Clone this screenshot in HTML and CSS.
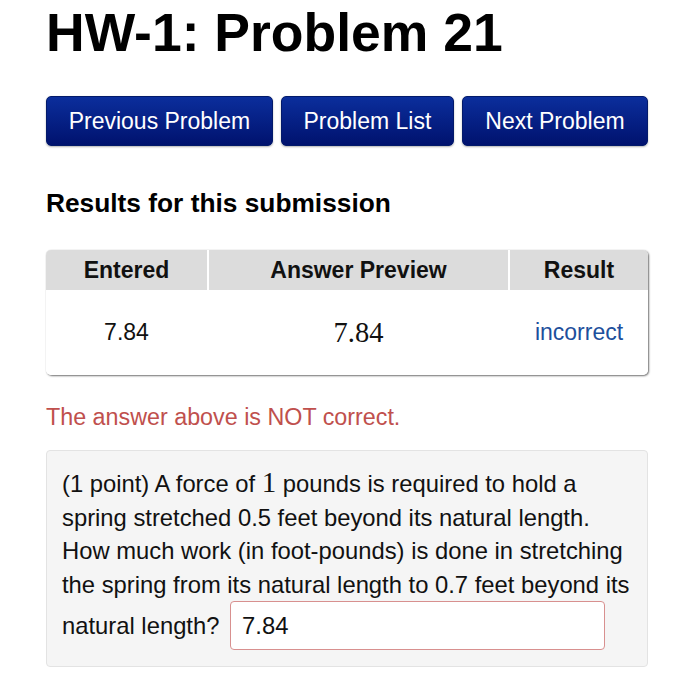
FILE: index.html
```html
<!DOCTYPE html>
<html>
<head>
<meta charset="utf-8">
<link rel="stylesheet" href="styles.css">
</head>
<body>
<div class="page">
  <h1 class="title">HW-1: Problem 21</h1>
  <div class="nav">
    <a class="btn">Previous Problem</a>
    <a class="btn">Problem List</a>
    <a class="btn">Next Problem</a>
  </div>
  <h2 class="results-title">Results for this submission</h2>
  <div class="results">
    <div class="row head">
      <div class="cell c1">Entered</div>
      <div class="cell c2">Answer Preview</div>
      <div class="cell c3">Result</div>
    </div>
    <div class="row body">
      <div class="cell c1">7.84</div>
      <div class="cell c2 math">7.84</div>
      <div class="cell c3 status">incorrect</div>
    </div>
  </div>
  <p class="message">The answer above is NOT correct.</p>
  <div class="problem">
    <p class="text">(1 point) A force of <span class="math">1</span> pounds is required to hold a spring stretched 0.5 feet beyond its natural length. How much work (in foot-pounds) is done in stretching the spring from its natural length to 0.7 feet beyond its natural length? <span class="answer">7.84</span></p>
  </div>
</div>
</body>
</html>
```
FILE: styles.css
```css
html, body {
  margin: 0;
  padding: 0;
  background: #ffffff;
}
body {
  font-family: "Liberation Sans", Arial, sans-serif;
  color: #111;
}
.page {
  width: 602px;
  margin-left: 46px;
  padding-top: 3px;
}
.title {
  margin: 0;
  font-size: 53.5px;
  line-height: 60px;
  font-weight: bold;
  color: #000;
}
.nav {
  display: flex;
  gap: 8px;
  margin-top: 33px;
}
.btn {
  display: block;
  box-sizing: border-box;
  height: 50px;
  padding: 0;
  line-height: 48px;
  font-size: 23px;
  text-align: center;
  white-space: nowrap;
  color: #fff;
  background: linear-gradient(#0b2e9c, #00126e);
  border: 1px solid #031a6a;
  border-radius: 5px;
  box-shadow: 0 1px 2px rgba(0,0,0,0.3);
}
.nav .btn:nth-child(1) { width: 228px; }
.nav .btn:nth-child(2) { width: 174px; }
.nav .btn:nth-child(3) { width: 187px; }
.results-title {
  margin: 42px 0 0;
  font-size: 26.3px;
  line-height: 30px;
  font-weight: bold;
  color: #000;
}
.results {
  margin-top: 32px;
  border-radius: 5px;
  overflow: hidden;
  box-shadow: 1px 1px 2px rgba(0,0,0,0.55), 0 0 1px rgba(0,0,0,0.2);
}
.row {
  display: flex;
}
.cell {
  text-align: center;
}
.c1 { width: 161px; }
.c2 { width: 299px; }
.c3 { flex: 1; }
.head .cell {
  background: #dcdcdc;
  height: 40px;
  line-height: 40px;
  font-weight: bold;
  font-size: 23px;
  color: #111;
}
.head .c2 { border-left: 2px solid #fff; border-right: 2px solid #fff; }
.body .cell {
  height: 85px;
  line-height: 85px;
  font-size: 23px;
  background: #fff;
}
.body .c2 { border-left: 2px solid #fff; border-right: 2px solid #fff; }
.math {
  font-family: "Liberation Serif", "Times New Roman", serif;
}
.body .math { font-size: 28.5px; }
.status { color: #1d4f9c; }
.message {
  margin: 27px 0 0;
  font-size: 23.3px;
  line-height: 30px;
  color: #c0504d;
}
.problem {
  margin-top: 18px;
  background: #f5f5f5;
  border: 1px solid #e3e3e3;
  border-radius: 4px;
  padding: 16px 10px 16px 15px;
}
.text {
  margin: 0;
  font-size: 23.8px;
  line-height: 33.5px;
  color: #111;
}
.text .math { font-size: 29px; line-height: 1; }
.answer {
  display: inline-block;
  box-sizing: border-box;
  width: 375px;
  height: 49px;
  line-height: 47px;
  padding: 0 11px;
  margin: 0 0 0 4px;
  background: #fff;
  border: 1px solid #d8908f;
  border-radius: 4px;
  font-size: 23.8px;
  vertical-align: baseline;
}
```
